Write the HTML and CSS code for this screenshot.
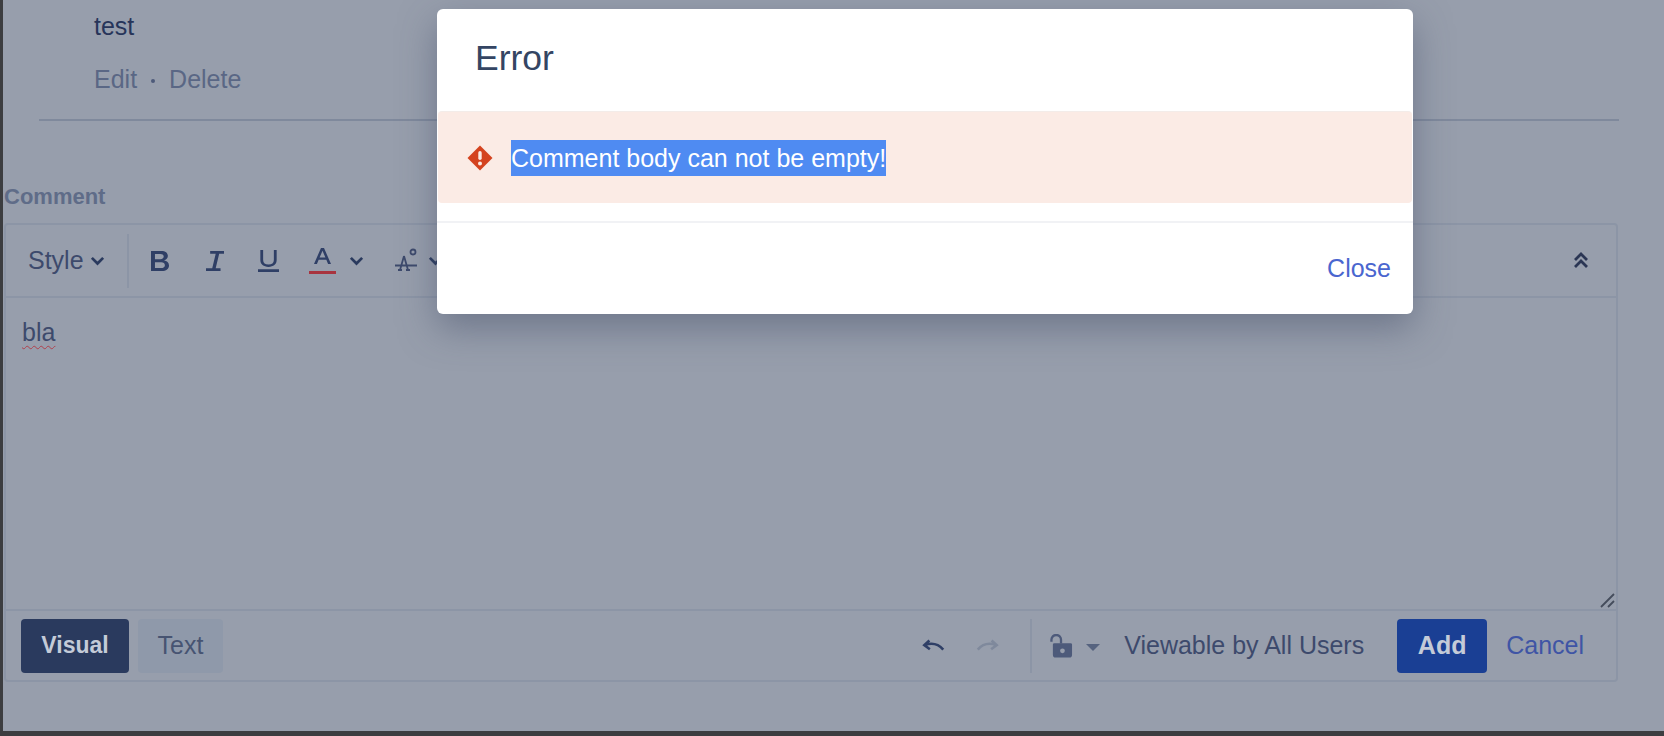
FILE: index.html
```html
<!DOCTYPE html>
<html lang="en">
<head>
    <meta charset="UTF-8">
    <meta name="viewport" content="width=device-width, initial-scale=1.0">
    <title>Error</title>
    <link rel="stylesheet" href="styles.css">
</head>
<body>
    <div class="page">
        <div class="activity">
            <div class="activity-body">test</div>
            <div class="activity-actions">
                <a class="muted-link">Edit</a>
                <span class="dot"></span>
                <a class="muted-link">Delete</a>
            </div>
        </div>

        <label class="field-label">Comment</label>
        <div class="editor">
            <div class="toolbar">
                <span class="style-btn">Style</span>
                <svg class="chev chev-style" viewBox="0 0 12 8"><path d="M1.500 1.500 6 6l4.500-4.500"/></svg>
                <span class="tool-sep"></span>
                <svg class="tool tool-b" viewBox="4.500 3 11.500 14" preserveAspectRatio="none"><path d="M4.500 3h6.200c2.500 0 4 1.300 4 3.500 0 1.600-1 2.700-2.300 3.100 1.700.3 3 1.500 3 3.500 0 2.400-1.700 3.900-4.400 3.900H4.500zM6.900 5.100v3.600h3.300c1.300 0 2-.7 2-1.800s-.7-1.800-2-1.800zm0 5.700v4.100h3.700c1.500 0 2.300-.8 2.300-2s-.8-2.100-2.300-2.100z"/></svg>
                <svg class="tool tool-i" viewBox="3.500 3 13 14" preserveAspectRatio="none"><path d="M6.500 3h10v2H13l-2.500 10H14v2H3.500v-2H8l2.500-10H6.500z"/></svg>
                <svg class="tool tool-u" viewBox="2 2 18 20" preserveAspectRatio="none"><path d="M4 2h2.400v9c0 2.800 1.700 4.200 4.600 4.200s4.600-1.400 4.600-4.200V2H18v9.200c0 4-2.700 6.200-7 6.200s-7-2.200-7-6.200zM2 19.500h18V22H2z"/></svg>
                <span class="tool-color">
                    <svg class="tool" viewBox="2.700 1 14.600 15" preserveAspectRatio="none"><path d="M8.700 1h2.600l6 15h-2.500l-1.500-4H6.700l-1.500 4H2.700zM7.500 10h5L10 3.500z"/></svg>
                    <span class="color-bar"></span>
                </span>
                <svg class="chev chev-color" viewBox="0 0 12 8"><path d="M1.500 1.500 6 6l4.500-4.500"/></svg>
                <svg class="tool-clear" viewBox="0 0 24 25"><path d="M10 8 6 22M10 8l4 14M1 17.500h22M4 22h4M12 22h4"/><circle cx="19" cy="4" r="2.500"/></svg>
                <svg class="chev chev-clear" viewBox="0 0 12 8"><path d="M1.500 1.500 6 6l4.500-4.500"/></svg>
                <svg class="collapse" viewBox="0 0 16 17"><path d="M2 8 8 2l6 6M2 15l6-6 6 6"/></svg>
            </div>
            <div class="editor-body">
                <span class="typed">bla</span>
                <svg class="grip" viewBox="0 0 16 16"><path d="M1 15 14 2M8 15l6-6"/></svg>
            </div>
            <div class="editor-footer">
                <span class="mode-btn mode-on">Visual</span>
                <span class="mode-btn">Text</span>
                <span class="spacer"></span>
                <svg class="undo" viewBox="0 0 26 14"><path d="M8 1.500 2.500 6.500l6 4.500M3 6.500c7-2.500 14-2 20 5"/></svg>
                <svg class="undo redo" viewBox="0 0 26 14"><path d="M18 1.500l5.500 5-6 4.500M23 6.500c-7-2.500-14-2-20 5"/></svg>
                <span class="tool-sep foot-sep"></span>
                <svg class="lock" viewBox="0 0 24 25"><path class="shackle" d="M1.500 8V6a5 5 0 0 1 10 0v4"/><path d="M3 11a1.500 1.500 0 0 1 1.500-1.500h17A1.500 1.500 0 0 1 23 11v10.500a3 3 0 0 1-3 3H6a3 3 0 0 1-3-3zm10 4a2.500 2.500 0 1 0 0 5 2.500 2.500 0 0 0 0-5z" fill-rule="evenodd"/></svg>
                <span class="caret"></span>
                <span class="viewable">Viewable by All Users</span>
                <span class="add-btn">Add</span>
                <a class="cancel">Cancel</a>
            </div>
        </div>
    </div>
    <div class="under-strip"></div>

    <div class="dialog">
        <div class="dialog-head">Error</div>
        <div class="dialog-msg">
            <svg class="err-icon" viewBox="0 0 26 26"><path d="M13 .5 25.500 13 13 25.500.5 13z"/><rect class="err-mark" x="11.300" y="6" width="3.400" height="9" rx="1.700"/><circle class="err-mark" cx="13" cy="18.500" r="2"/></svg>
            <span class="err-text">Comment body can not be empty!</span>
        </div>
        <div class="dialog-foot"><a class="close-link">Close</a></div>
    </div>
</body>
</html>
```

FILE: styles.css
```css
html, body
{
    margin: 0;
    height: 100%;
    overflow: hidden;
}
body
{
    width: 1664px;
    height: 736px;
    position: relative;
    display: flex;
    flex-direction: column;
    background: #3c3d40;
    font-family: "Liberation Sans", Arial, sans-serif;
    color: #27355a;
}
.page
{
    height: 731px;
    margin-left: 3px;
    background: #979eac;
    box-sizing: border-box;
    padding-top: 13px;
}
.under-strip
{
    height: 5px;
}

/* activity above the editor */
.activity
{
    margin: 0 45px 0 36px;
    height: 108px;
    box-sizing: border-box;
    border-bottom: 2px solid #7f899c;
    padding-left: 55px;
}
.activity-body
{
    font-size: 25px;
    line-height: 26px;
}
.activity-actions
{
    margin-top: 26px;
    font-size: 25px;
    line-height: 28px;
    display: flex;
    align-items: center;
}
.muted-link
{
    color: #5a6785;
}
.dot
{
    width: 4px;
    height: 4px;
    margin: 4px 14px 0 14px;
    border-radius: 50%;
    background: #4d5a7a;
}

.field-label
{
    display: block;
    margin: 64px 0 0 1px;
    font-size: 22px;
    line-height: 24px;
    font-weight: bold;
    color: #5f6c88;
}
.editor
{
    width: 1614px;
    height: 459px;
    margin: 14px 0 0 1px;
    box-sizing: border-box;
    border: 2px solid #8c95a6;
    border-radius: 4px;
    display: flex;
    flex-direction: column;
}

/* toolbar */
.toolbar
{
    height: 73px;
    flex: none;
    box-sizing: border-box;
    border-bottom: 2px solid #8c95a6;
    display: flex;
    align-items: center;
    padding: 0 27px 0 22px;
    color: #2f4068;
}
.style-btn
{
    font-size: 25px;
    color: #3d4a6c;
}
.chev
{
    width: 15px;
    height: 10px;
    flex: none;
    fill: none;
    stroke: #2a3a5e;
    stroke-width: 2.200;
}
.chev-style { margin-left: 6px; }
.tool-sep
{
    width: 2px;
    height: 54px;
    flex: none;
    margin: 0 22px 0 22px;
    background: #8c95a6;
}
.tool
{
    fill: #2f3f66;
    display: block;
    flex: none;
}
.tool-b { width: 19px; height: 20px; }
.tool-i { width: 18px; height: 20px; margin-left: 36px; }
.tool-u { width: 21px; height: 22px; margin-left: 34px; }
.tool-color
{
    margin-left: 30px;
    width: 27px;
    display: flex;
    flex-direction: column;
    align-items: center;
    gap: 7px;
}
.tool-color .tool { width: 17px; height: 16px; }
.color-bar
{
    width: 27px;
    height: 3px;
    background: #a8343f;
}
.chev-color { margin-left: 13px; }
.tool-clear
{
    width: 24px;
    height: 25px;
    flex: none;
    margin-left: 30px;
    stroke: #3d4a6c;
    stroke-width: 1.800;
    fill: none;
}
.chev-clear { margin-left: 10px; }
.collapse
{
    width: 16px;
    height: 17px;
    flex: none;
    margin-left: auto;
    fill: none;
    stroke: #2b3654;
    stroke-width: 2.800;
}

/* text area */
.editor-body
{
    flex: 1;
    position: relative;
    padding: 20px 16px;
    font-size: 25px;
    line-height: 28px;
    color: #3d4a6c;
}
.typed
{
    text-decoration: underline wavy #b0404c 1px;
    text-underline-offset: 4px;
}
.grip
{
    position: absolute;
    right: 0;
    bottom: 1px;
    width: 16px;
    height: 16px;
    fill: none;
    stroke: #454c5c;
    stroke-width: 1.800;
}

/* footer */
.editor-footer
{
    height: 71px;
    flex: none;
    box-sizing: border-box;
    border-top: 2px solid #8c95a6;
    display: flex;
    align-items: center;
    padding: 0 32px 0 15px;
}
.mode-btn
{
    height: 54px;
    width: 85px;
    margin-left: 9px;
    box-sizing: border-box;
    display: flex;
    align-items: center;
    justify-content: center;
    border-radius: 4px;
    background: #8f99aa;
    font-size: 25px;
    color: #475472;
}
.mode-on
{
    width: 108px;
    margin-left: 0;
    background: #2a3a5e;
    font-size: 23px;
    font-weight: bold;
    color: #c4cbd8;
}
.spacer
{
    flex: 1;
}
.undo
{
    width: 24px;
    height: 13px;
    flex: none;
    fill: none;
    stroke: #2f3f66;
    stroke-width: 2.800;
    margin-right: 29px;
}
.redo
{
    stroke: #7f899c;
    margin-right: 0;
}
.foot-sep
{
    margin: 0 18px 0 31px;
}
.lock
{
    width: 23px;
    height: 24px;
    flex: none;
    fill: #4d5a7a;
}
.shackle
{
    fill: none;
    stroke: #4d5a7a;
    stroke-width: 2.400;
}
.caret
{
    width: 0;
    height: 0;
    margin: 4px 0 0 13px;
    border-left: 7px solid transparent;
    border-right: 7px solid transparent;
    border-top: 7px solid #56637f;
}
.viewable
{
    margin-left: 24px;
    font-size: 25px;
    color: #3d4a6c;
}
.add-btn
{
    width: 90px;
    height: 54px;
    margin-left: 33px;
    display: flex;
    align-items: center;
    justify-content: center;
    border-radius: 4px;
    background: #1a3f94;
    font-size: 25px;
    font-weight: bold;
    color: #c4cbd8;
}
.cancel
{
    margin-left: 19px;
    font-size: 25px;
    color: #3f55a5;
}

/* error dialog over the page */
.dialog
{
    position: absolute;
    left: 437px;
    top: 9px;
    width: 976px;
    height: 305px;
    box-sizing: border-box;
    background: #fff;
    border-radius: 6px;
    box-shadow: 0 14px 36px rgba(70, 80, 105, 0.5);
    display: flex;
    flex-direction: column;
}
.dialog-head
{
    height: 102px;
    flex: none;
    box-sizing: border-box;
    padding: 29px 0 0 38px;
    font-size: 35.500px;
    line-height: 40px;
    color: #344563;
}
.dialog-msg
{
    height: 92px;
    flex: none;
    margin: 0 1px;
    display: flex;
    align-items: center;
    padding: 0 0 0 29px;
    box-sizing: border-box;
    background: #fbebe5;
    border-radius: 4px;
    border-top: 1px solid #f3ece9;
}
.err-icon
{
    width: 26px;
    height: 26px;
    fill: #d4431f;
    flex: none;
}
.err-mark
{
    fill: #fbebe5;
}
.err-text
{
    margin-left: 18px;
    font-size: 25px;
    line-height: 36px;
    color: #fff;
    background: #4f8bf2;
}
.dialog-foot
{
    flex: 1;
    margin-top: 18px;
    border-top: 2px solid #f1f2f5;
    display: flex;
    justify-content: flex-end;
    align-items: center;
    padding: 0 22px 0 0;
}
.close-link
{
    font-size: 25px;
    color: #4a66cf;
}
```
